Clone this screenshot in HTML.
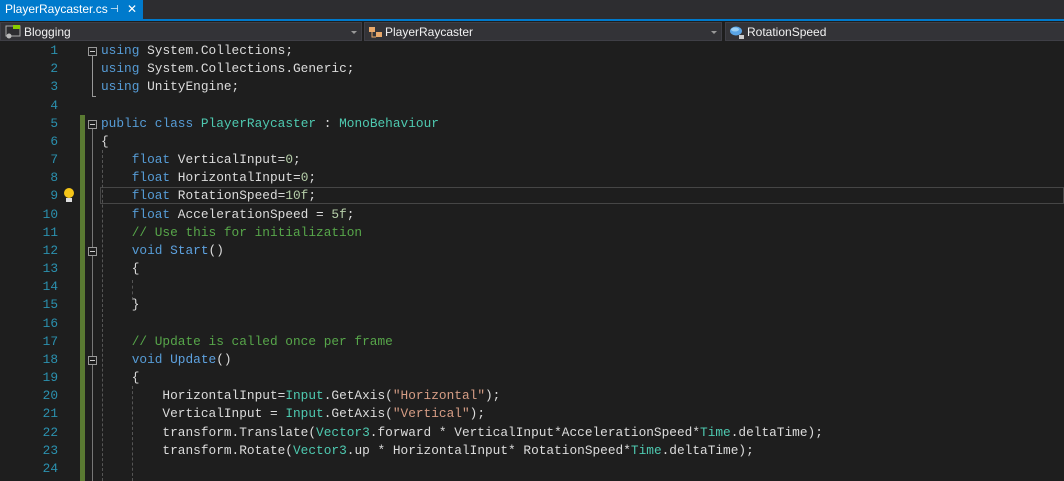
<!DOCTYPE html>
<html><head><meta charset="utf-8"><style>
body{margin:0;width:1064px;height:481px;background:#1e1e1e;overflow:hidden;position:relative;font-family:"Liberation Sans",sans-serif}
.tabbar{position:absolute;left:0;top:0;width:1064px;height:19px;background:#2d2d30}
.tab{position:absolute;left:0;top:0;width:143px;height:19px;background:#007acc;color:#fff;font-size:12px;line-height:19px}
.blue{position:absolute;left:0;top:19px;width:1064px;height:2px;background:#007acc}
.dd{position:absolute;top:22px;height:19px;background:#333337;border:1px solid #3f3f46;box-sizing:border-box;color:#f1f1f1;font-size:12px;line-height:18px}
.arr{position:absolute;right:4px;top:8px;width:0;height:0;border-left:3px solid transparent;border-right:3px solid transparent;border-top:3px solid #999}
.code{position:absolute;left:0;top:0;font-family:"Liberation Mono",monospace;font-size:12.8px;color:#dcdcdc;white-space:pre}
.l{position:absolute;height:18px;line-height:18px}
.n{position:absolute;width:58px;text-align:right;color:#2b91af;font-family:"Liberation Mono",monospace;font-size:12.8px;line-height:18px;height:18px}
.k{color:#569cd6}.t{color:#4ec9b0}.s{color:#d69d85}.c{color:#57a64a}.d{color:#b5cea8}.m{color:#5ea2e0}
.fold{position:absolute;left:88px;width:9px;height:9px;border:1px solid #999;box-sizing:border-box;background:#1e1e1e}
.fold:after{content:"";position:absolute;left:1px;top:3px;width:5px;height:1px;background:#ccc}
.vg{position:absolute;width:0;border-left:1px dashed #555}
</style></head><body>
<div class="tabbar"><div class="tab"><span style="position:absolute;left:5px">PlayerRaycaster.cs</span><span style="position:absolute;left:110px;font-size:10px">⊣</span><span style="position:absolute;left:127px">✕</span></div></div>
<div class="blue"></div>
<div class="dd" style="left:0;width:362px"><svg style="position:absolute;left:4px;top:2px" width="16" height="14"><rect x="1" y="1" width="14" height="10" fill="#2d2d30" stroke="#aaa"/><rect x="8" y="0" width="7" height="4" fill="#8c0"/><circle cx="4" cy="11" r="2.5" fill="#bbb"/></svg><span style="position:absolute;left:23px">Blogging</span><div class="arr"></div></div>
<div class="dd" style="left:364px;width:358px"><svg style="position:absolute;left:4px;top:3px" width="14" height="13"><rect x="0" y="1" width="6" height="5" fill="#e8a86a"/><rect x="7" y="6" width="6" height="5" fill="#e8a86a"/><path d="M3 6v5h4" stroke="#e8a86a" fill="none"/></svg><span style="position:absolute;left:20px">PlayerRaycaster</span><div class="arr"></div></div>
<div class="dd" style="left:725px;width:339px;border-right:none"><svg style="position:absolute;left:3px;top:2px" width="16" height="15"><ellipse cx="7" cy="6" rx="6" ry="4.5" fill="#5aa5e6"/><ellipse cx="6" cy="4.5" rx="4" ry="2" fill="#9cd0f5"/><rect x="10" y="10" width="5" height="4" fill="#ccc"/></svg><span style="position:absolute;left:21px">RotationSpeed</span></div>
<div style="position:absolute;left:80px;top:115px;width:5px;height:366px;background:#5a7a32"></div>
<div style="position:absolute;left:100px;top:187px;width:964px;height:17px;border:1px solid #464646;box-sizing:border-box"></div>
<div style="position:absolute;left:92px;top:56px;width:0;height:40px;border-left:1px solid #999"></div>
<div style="position:absolute;left:92px;top:96px;width:4px;height:1px;background:#999"></div>
<div style="position:absolute;left:92px;top:129px;width:0;height:352px;border-left:1px solid #777"></div>
<div class="vg" style="left:102px;top:150px;height:331px"></div>
<div class="vg" style="left:132px;top:280px;height:20px"></div>
<div class="vg" style="left:132px;top:386px;height:95px"></div>
<svg style="position:absolute;left:62px;top:187px" width="14" height="18"><circle cx="7" cy="6" r="5" fill="#f5c518"/><rect x="4" y="11" width="6" height="4" fill="#ddd"/></svg>
<div class="fold" style="top:47px"></div><div class="fold" style="top:120px"></div><div class="fold" style="top:247px"></div><div class="fold" style="top:356px"></div>
<div id="nums"></div>
<div class="code" id="code"></div>
<script>
var L=[
'<span class="k">using</span> System.Collections;',
'<span class="k">using</span> System.Collections.Generic;',
'<span class="k">using</span> UnityEngine;',
'',
'<span class="k">public</span> <span class="k">class</span> <span class="t">PlayerRaycaster</span> : <span class="t">MonoBehaviour</span>',
'{',
'    <span class="k">float</span> VerticalInput=<span class="d">0</span>;',
'    <span class="k">float</span> HorizontalInput=<span class="d">0</span>;',
'    <span class="k">float</span> RotationSpeed=<span class="d">10f</span>;',
'    <span class="k">float</span> AccelerationSpeed = <span class="d">5f</span>;',
'    <span class="c">// Use this for initialization</span>',
'    <span class="k">void</span> <span class="m">Start</span>()',
'    {',
'',
'    }',
'',
'    <span class="c">// Update is called once per frame</span>',
'    <span class="k">void</span> <span class="m">Update</span>()',
'    {',
'        HorizontalInput=<span class="t">Input</span>.GetAxis(<span class="s">"Horizontal"</span>);',
'        VerticalInput = <span class="t">Input</span>.GetAxis(<span class="s">"Vertical"</span>);',
'        transform.Translate(<span class="t">Vector3</span>.forward * VerticalInput*AccelerationSpeed*<span class="t">Time</span>.deltaTime);',
'        transform.Rotate(<span class="t">Vector3</span>.up * HorizontalInput* RotationSpeed*<span class="t">Time</span>.deltaTime);',
''];
var h='',n='';
for(var i=0;i<L.length;i++){var y=42+i*18.17;
h+='<div class="l" style="left:101px;top:'+y+'px">'+L[i]+'</div>';
n+='<div class="n" style="left:0;top:'+y+'px">'+(i+1)+'</div>';}
document.getElementById('code').innerHTML=h;document.getElementById('nums').innerHTML=n;
</script>
</body></html>
